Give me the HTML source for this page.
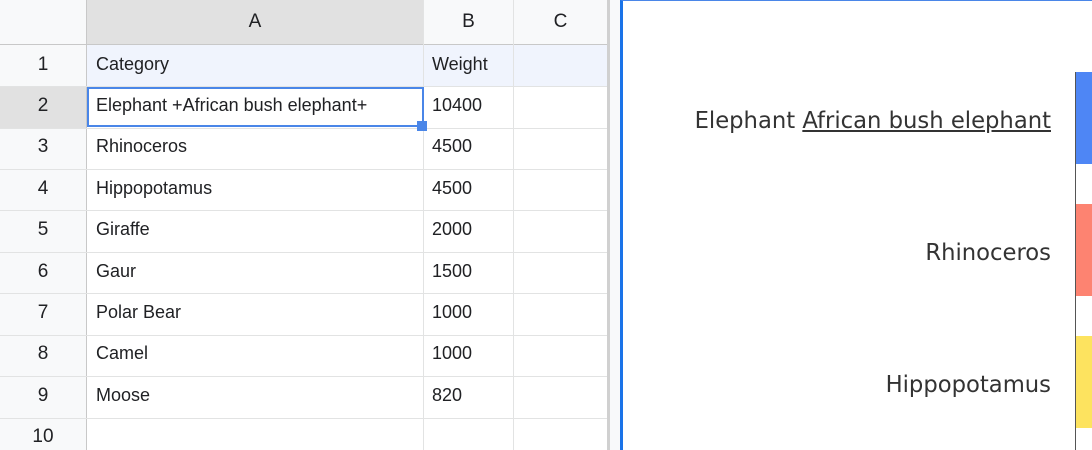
<!DOCTYPE html>
<html><head><style>
body{margin:0;width:1092px;height:450px;overflow:hidden;background:#fff;font-family:"Liberation Sans",Roboto,sans-serif;position:relative}
.a{position:absolute;box-sizing:border-box}
.t{font-size:18px;color:#202124;line-height:20px}
.h{font-size:19px;color:#202124;text-align:center}
.vl{position:absolute;width:1px;background:#e2e3e3}
.hl{position:absolute;height:1px;background:#e2e3e3}
.lb{position:absolute;right:41px;font-family:"DejaVu Sans","Liberation Sans",sans-serif;font-size:22.7px;color:#333;white-space:nowrap}
</style></head><body>
<div class="a" style="left:0;top:0;width:607px;height:44px;background:#f8f9fa"></div>
<div class="a" style="left:87px;top:0;width:336px;height:44px;background:#e1e1e1"></div>
<div class="a" style="left:0;top:44px;width:86px;height:406px;background:#f8f9fa"></div>
<div class="a" style="left:0;top:87px;width:86px;height:41px;background:#e1e1e1"></div>
<div class="a" style="left:87px;top:45px;width:520px;height:41px;background:#f0f4fd"></div>
<div class="hl" style="left:0;top:44px;width:607px;background:#c8c8c8"></div>
<div class="vl" style="left:86px;top:0;height:450px;background:#c8c8c8"></div>
<div class="vl" style="left:423px;top:0;height:450px"></div>
<div class="vl" style="left:513px;top:0;height:450px"></div>
<div class="hl" style="left:0;top:86px;width:607px"></div>
<div class="hl" style="left:0;top:128px;width:607px"></div>
<div class="hl" style="left:0;top:169px;width:607px"></div>
<div class="hl" style="left:0;top:210px;width:607px"></div>
<div class="hl" style="left:0;top:252px;width:607px"></div>
<div class="hl" style="left:0;top:293px;width:607px"></div>
<div class="hl" style="left:0;top:335px;width:607px"></div>
<div class="hl" style="left:0;top:376px;width:607px"></div>
<div class="hl" style="left:0;top:418px;width:607px"></div>
<div class="a" style="left:607px;top:0;width:13px;height:450px;background:#f8f9fa;border-left:3px solid #d0d0d0"></div>
<div class="a h" style="left:87px;top:11px;width:336px">A</div>
<div class="a h" style="left:424px;top:11px;width:89px">B</div>
<div class="a h" style="left:514px;top:11px;width:93px">C</div>
<div class="a h" style="left:0;top:54px;width:86px">1</div>
<div class="a h" style="left:0;top:95px;width:86px">2</div>
<div class="a h" style="left:0;top:136px;width:86px">3</div>
<div class="a h" style="left:0;top:178px;width:86px">4</div>
<div class="a h" style="left:0;top:219px;width:86px">5</div>
<div class="a h" style="left:0;top:261px;width:86px">6</div>
<div class="a h" style="left:0;top:302px;width:86px">7</div>
<div class="a h" style="left:0;top:343px;width:86px">8</div>
<div class="a h" style="left:0;top:385px;width:86px">9</div>
<div class="a h" style="left:0;top:426px;width:86px">10</div>
<div class="a t" style="left:96px;top:54px">Category</div><div class="a t" style="left:432px;top:54px">Weight</div>
<div class="a t" style="left:96px;top:95px">Elephant +African bush elephant+</div><div class="a t" style="left:432px;top:95px">10400</div>
<div class="a t" style="left:96px;top:136px">Rhinoceros</div><div class="a t" style="left:432px;top:136px">4500</div>
<div class="a t" style="left:96px;top:178px">Hippopotamus</div><div class="a t" style="left:432px;top:178px">4500</div>
<div class="a t" style="left:96px;top:219px">Giraffe</div><div class="a t" style="left:432px;top:219px">2000</div>
<div class="a t" style="left:96px;top:261px">Gaur</div><div class="a t" style="left:432px;top:261px">1500</div>
<div class="a t" style="left:96px;top:302px">Polar Bear</div><div class="a t" style="left:432px;top:302px">1000</div>
<div class="a t" style="left:96px;top:343px">Camel</div><div class="a t" style="left:432px;top:343px">1000</div>
<div class="a t" style="left:96px;top:385px">Moose</div><div class="a t" style="left:432px;top:385px">820</div>
<div class="a" style="left:87px;top:87px;width:337px;height:40px;border:2px solid #4a86e8"></div>
<div class="a" style="left:417px;top:121px;width:10px;height:10px;background:#4a86e8"></div>
<div class="a" style="left:620px;top:0;width:472px;height:450px;border-left:3px solid #1a73e8;border-top:1px solid #4a86e8;background:#fff"></div>
<div class="a" style="left:1075px;top:72px;width:1px;height:378px;background:#555"></div>
<div class="a" style="left:1076px;top:72px;width:16px;height:92px;background:#4e86f5"></div>
<div class="a" style="left:1076px;top:204px;width:16px;height:92px;background:#fd8371"></div>
<div class="a" style="left:1076px;top:336px;width:16px;height:92px;background:#fde35f"></div>
<div class="lb" style="top:108px">Elephant <span style="text-decoration:underline">African bush elephant</span></div>
<div class="lb" style="top:240px">Rhinoceros</div>
<div class="lb" style="top:372px">Hippopotamus</div>
</body></html>
